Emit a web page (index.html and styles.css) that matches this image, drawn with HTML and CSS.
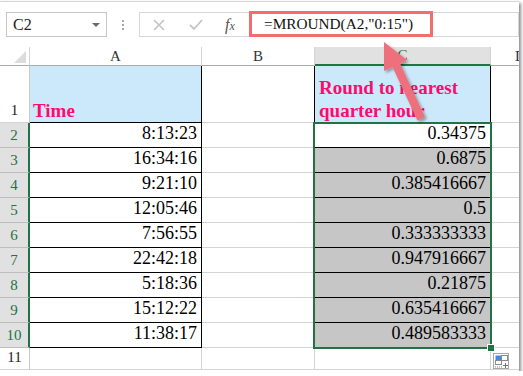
FILE: index.html
```html
<!DOCTYPE html>
<html>
<head>
<meta charset="utf-8">
<link rel="stylesheet" href="styles.css">
</head>
<body>
<div class="frame">
  <div class="fbar">
    <div class="namebox"><span class="nm">C2</span><span class="caret"></span></div>
    <div class="grip"><i></i><i></i><i></i></div>
    <div class="btns">
      <svg class="ico" width="12" height="12" viewBox="0 0 12 12"><path d="M1 1L11 11M11 1L1 11" stroke="#c4c4c4" stroke-width="1.6" fill="none"/></svg>
      <svg class="ico" width="14" height="12" viewBox="0 0 14 12"><path d="M1 6L5 10L13 1" stroke="#c4c4c4" stroke-width="1.8" fill="none"/></svg>
      <span class="fx">f<span class="fxs">x</span></span>
    </div>
    <div class="formula"><div class="hl">=MROUND(A2,"0:15")</div></div>
  </div>

  <div class="sheet">
    <div class="h corner"><span class="tri"></span></div>
    <div class="h">A</div>
    <div class="h">B</div>
    <div class="h act">C</div>
    <div class="h">D</div>

    <div class="r">1</div>
    <div class="c blue bx">Time</div>
    <div class="c bkr"></div>
    <div class="c blue bkr wrap">Round to nearest quarter hour</div>
    <div class="c"></div>

    <div class="r act">2</div><div class="c bx">8:13:23</div><div class="c"></div><div class="c bx">0.34375</div><div class="c"></div>
    <div class="r act">3</div><div class="c bx">16:34:16</div><div class="c"></div><div class="c bx gray">0.6875</div><div class="c"></div>
    <div class="r act">4</div><div class="c bx">9:21:10</div><div class="c"></div><div class="c bx gray">0.385416667</div><div class="c"></div>
    <div class="r act">5</div><div class="c bx">12:05:46</div><div class="c"></div><div class="c bx gray">0.5</div><div class="c"></div>
    <div class="r act">6</div><div class="c bx">7:56:55</div><div class="c"></div><div class="c bx gray">0.333333333</div><div class="c"></div>
    <div class="r act">7</div><div class="c bx">22:42:18</div><div class="c"></div><div class="c bx gray">0.947916667</div><div class="c"></div>
    <div class="r act">8</div><div class="c bx">5:18:36</div><div class="c"></div><div class="c bx gray">0.21875</div><div class="c"></div>
    <div class="r act">9</div><div class="c bx">15:12:22</div><div class="c"></div><div class="c bx gray">0.635416667</div><div class="c"></div>
    <div class="r act">10</div><div class="c bx">11:38:17</div><div class="c"></div><div class="c bx gray">0.489583333</div><div class="c"></div>

    <div class="r">11</div><div class="c"></div><div class="c"></div><div class="c"></div><div class="c"></div>

    <div class="sel"><span class="handle"></span></div>
    <div class="qa">
      <svg width="16" height="16" viewBox="0 0 16 16">
        <rect x="2.5" y="2.5" width="6" height="5" fill="#3c8cf0"/>
        <rect x="8.5" y="2.5" width="6" height="5" fill="none" stroke="#8a8a8a"/>
        <rect x="2.5" y="7.5" width="6" height="4" fill="none" stroke="#8a8a8a"/>
        <path d="M2 14H10" stroke="#8a8a8a" stroke-dasharray="1 1"/>
        <path d="M12.5 10V15M10 12.5H15" stroke="#707070"/>
      </svg>
    </div>
  </div>

  <svg class="arrow" width="523" height="376" viewBox="0 0 523 376">
    <defs>
      <filter id="sh" x="-20%" y="-20%" width="140%" height="140%">
        <feDropShadow dx="2" dy="2" stdDeviation="1.5" flood-color="#000" flood-opacity="0.35"/>
      </filter>
    </defs>
    <polygon filter="url(#sh)" fill="#ee6f7b" points="384,41 407,59 400,62.5 425,116 417.5,119.5 392.5,66 384,70"/>
  </svg>
</div>
</body>
</html>
```

FILE: styles.css
```css
html, body {
  margin: 0;
  padding: 0;
  background: #ffffff;
}

.frame {
  position: relative;
  width: 519px;
  height: 369px;
  margin-top: 1px;
  border-top: 1px solid #d6d6d6;
  background: #ffffff;
  box-shadow: 2px 2px 3px rgba(0, 0, 0, 0.45);
  font-family: "Liberation Serif", "Times New Roman", serif;
}

.fbar {
  display: flex;
  height: 25px;
  margin: 10px 0 0 6px;
}

.namebox {
  box-sizing: border-box;
  width: 101px;
  height: 25px;
  border: 1px solid #c6c6c6;
  display: flex;
  align-items: center;
  justify-content: space-between;
  padding: 0 6px 0 6px;
}

.nm {
  font-size: 16px;
  color: #222;
}

.caret {
  width: 0;
  height: 0;
  border-left: 4px solid transparent;
  border-right: 4px solid transparent;
  border-top: 4px solid #6a6a6a;
}

.grip {
  width: 32px;
  display: flex;
  flex-direction: column;
  align-items: center;
  justify-content: center;
  gap: 2px;
}

.grip i {
  display: block;
  width: 2px;
  height: 2px;
  background: #a8a8a8;
}

.btns {
  box-sizing: border-box;
  width: 110px;
  height: 25px;
  border: 1px solid #d6d6d6;
  border-right: none;
  display: flex;
  align-items: center;
  padding-left: 13px;
  gap: 24px;
}

.ico {
  display: block;
}

.fx {
  font-style: italic;
  font-size: 16px;
  color: #555;
  margin-left: -2px;
}

.fxs {
  font-size: 12px;
}

.formula {
  flex: 1;
  height: 25px;
  box-sizing: border-box;
  border: 1px solid #d6d6d6;
  border-left: none;
}

.hl {
  box-sizing: border-box;
  width: 184px;
  height: 26px;
  margin-top: -2px;
  border: 3px solid #f26d70;
  font-size: 15.3px;
  line-height: 20px;
  padding-left: 12px;
  color: #111;
}

.sheet {
  position: relative;
  display: grid;
  grid-template-columns: 30px 172px 113px 176px 60px;
  grid-template-rows: 19px 57px repeat(9, 25px) 22px;
  width: 519px;
  overflow: hidden;
  margin-top: 10px;
}

.h {
  box-sizing: border-box;
  display: flex;
  align-items: center;
  justify-content: center;
  border-right: 1px solid #d4d4d4;
  border-bottom: 1px solid #ababab;
  font-size: 15px;
  color: #333;
  background: #ffffff;
}

.h.act {
  background: #e1e1e1;
  color: #217346;
  border-bottom: 2px solid #217346;
}

.corner {
  align-items: flex-end;
  justify-content: flex-end;
  padding: 0 3px 2px 0;
}

.tri {
  width: 0;
  height: 0;
  border-left: 12px solid transparent;
  border-bottom: 12px solid #dcdcdc;
}

.r {
  box-sizing: border-box;
  display: flex;
  align-items: flex-end;
  justify-content: center;
  border-right: 1px solid #c8c8c8;
  border-bottom: 1px solid #d4d4d4;
  font-size: 15px;
  color: #222;
  padding-bottom: 3px;
}

.r.act {
  background: #e1e1e1;
  color: #217346;
  border-right: 2px solid #217346;
  border-bottom: 1px solid #bdbdbd;
}

.c {
  box-sizing: border-box;
  display: flex;
  align-items: flex-end;
  justify-content: flex-end;
  border-right: 1px solid #d4d4d4;
  border-bottom: 1px solid #d4d4d4;
  padding: 0 4px 3px 0;
  font-size: 18px;
  color: #000;
}

.bx {
  border-right-color: #000;
  border-bottom-color: #000;
}

.bkr {
  border-right-color: #000;
}

.blue {
  background: #cce9fc;
  color: #ff0a6e;
  font-weight: bold;
  font-size: 19px;
  justify-content: flex-start;
  padding: 0 0 0 3px;
}

.wrap {
  line-height: 23px;
  padding-left: 4px;
  padding-bottom: 0;
}

.gray {
  background: #c6c6c6;
}

.sel {
  position: absolute;
  left: 313px;
  top: 75px;
  width: 179px;
  height: 227px;
  box-sizing: border-box;
  border: 2px solid #217346;
  pointer-events: none;
}

.handle {
  position: absolute;
  right: -5px;
  bottom: -5px;
  width: 6px;
  height: 6px;
  background: #217346;
  border: 1px solid #ffffff;
}

.qa {
  position: absolute;
  left: 493px;
  top: 306px;
  width: 16px;
  height: 16px;
  box-sizing: border-box;
  border: 1px solid #a8a8a8;
  background: #ffffff;
}

.qa svg {
  display: block;
  margin: -1px;
}

.arrow {
  position: absolute;
  left: 0;
  top: -1px;
  pointer-events: none;
}
```
